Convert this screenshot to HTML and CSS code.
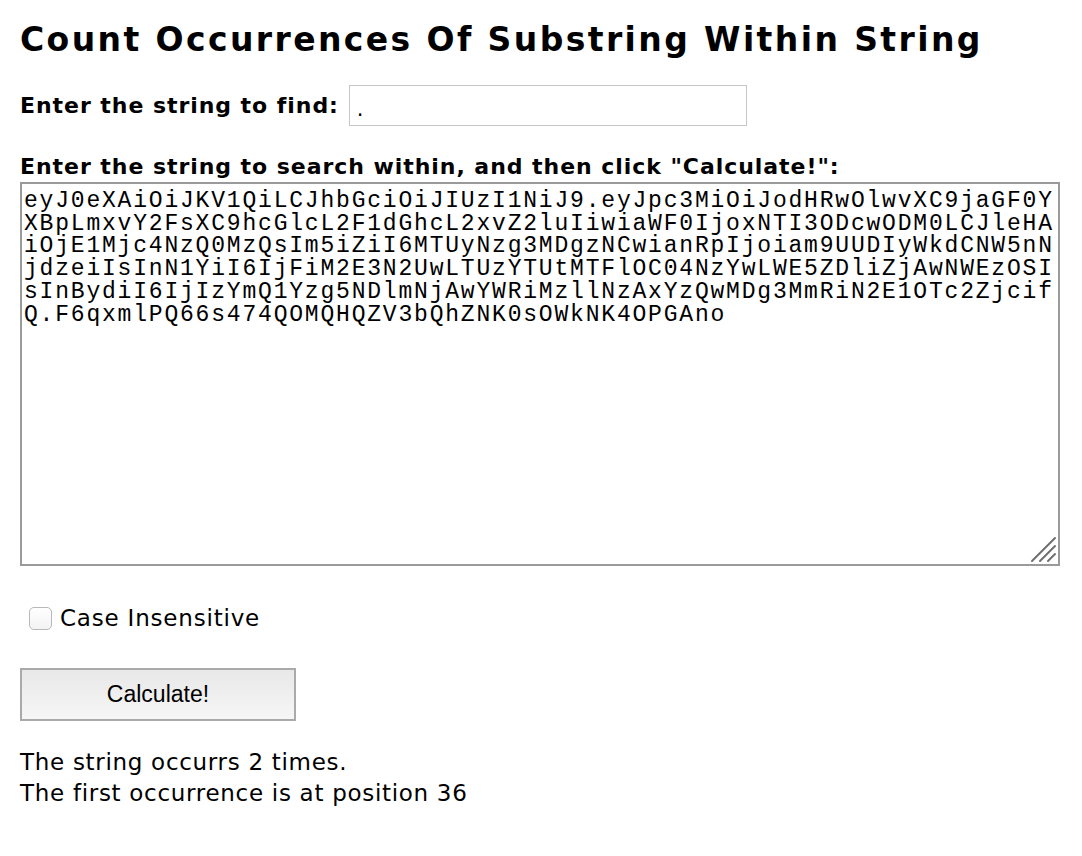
FILE: index.html
```html
<!DOCTYPE html>
<html>
<head>
<meta charset="utf-8">
<link rel="stylesheet" href="styles.css">
</head>
<body>
<div class="page">
  <h1 class="title">Count Occurrences Of Substring Within String</h1>
  <div class="find-row">
    <label class="label" for="find">Enter the string to find:</label>
    <input class="find-input" id="find" type="text" value=".">
  </div>
  <label class="label label-within" for="within">Enter the string to search within, and then click "Calculate!":</label>
  <div class="within-wrap">
    <textarea class="within" id="within">eyJ0eXAiOiJKV1QiLCJhbGciOiJIUzI1NiJ9.eyJpc3MiOiJodHRwOlwvXC9jaGF0YXBpLmxvY2FsXC9hcGlcL2F1dGhcL2xvZ2luIiwiaWF0IjoxNTI3ODcwODM0LCJleHAiOjE1Mjc4NzQ0MzQsIm5iZiI6MTUyNzg3MDgzNCwianRpIjoiam9UUDIyWkdCNW5nNjdzeiIsInN1YiI6IjFiM2E3N2UwLTUzYTUtMTFlOC04NzYwLWE5ZDliZjAwNWEzOSIsInBydiI6IjIzYmQ1Yzg5NDlmNjAwYWRiMzllNzAxYzQwMDg3MmRiN2E1OTc2ZjcifQ.F6qxmlPQ66s474QOMQHQZV3bQhZNK0sOWkNK4OPGAno</textarea>
    <svg class="grip" width="28" height="28" viewBox="0 0 28 28">
      <g stroke="#6e6e6e" stroke-width="2" stroke-linecap="round">
        <line x1="3" y1="26" x2="26" y2="3"/>
        <line x1="11" y1="26" x2="26" y2="11"/>
        <line x1="19" y1="26" x2="26" y2="19"/>
      </g>
    </svg>
  </div>
  <label class="check-row">
    <input class="check" type="checkbox">
    <span class="check-label">Case Insensitive</span>
  </label>
  <button class="calc" type="button">Calculate!</button>
  <div class="results">
    <div class="result-line">The string occurrs 2 times.</div>
    <div class="result-line">The first occurrence is at position 36</div>
  </div>
</div>
</body>
</html>
```

FILE: styles.css
```css
html, body {
  margin: 0;
  padding: 0;
  background: #ffffff;
}

.page {
  padding: 18px 20px 0 20px;
  display: flex;
  flex-direction: column;
  align-items: flex-start;
  font-family: "DejaVu Sans", Verdana, sans-serif;
  color: #000;
}

.title {
  margin: 0;
  font-size: 33px;
  letter-spacing: 2.4px;
  line-height: 44px;
  font-weight: bold;
  white-space: nowrap;
}

.find-row {
  margin-top: 23px;
  display: flex;
  align-items: center;
  gap: 10px;
}

.label {
  font-weight: bold;
  font-size: 22px;
  letter-spacing: 0.95px;
  line-height: 26px;
}

.find-input {
  box-sizing: border-box;
  width: 398px;
  height: 41px;
  border: 1px solid #c6c6c6;
  padding: 6px 6px 0 7px;
  font-family: "DejaVu Sans", Verdana, sans-serif;
  font-size: 21px;
  color: #000;
  background: #fff;
  outline: none;
}

.label-within {
  margin-top: 28px;
}

.within-wrap {
  position: relative;
  margin-top: 2px;
  display: flex;
}

.within {
  box-sizing: border-box;
  margin: 0;
  width: 1040px;
  height: 384px;
  border: 2px solid #9a9a9a;
  padding: 6px 2px 2px 2px;
  font-family: "Liberation Mono", "Courier New", monospace;
  font-size: 23px;
  letter-spacing: 1.8px;
  line-height: 22.7px;
  color: #000;
  word-break: break-all;
  resize: none;
  outline: none;
}

.grip {
  position: absolute;
  right: 3px;
  bottom: 3px;
  pointer-events: none;
}

.check-row {
  margin-top: 39px;
  margin-left: 9px;
  display: flex;
  align-items: center;
  gap: 8px;
}

.check {
  -webkit-appearance: none;
  appearance: none;
  margin: 0;
  width: 23px;
  height: 23px;
  box-sizing: border-box;
  border: 1px solid #b8b8b8;
  border-radius: 5px;
  background: linear-gradient(#ffffff, #f3f3f3);
}

.check-label {
  font-size: 23px;
  letter-spacing: 0.8px;
  line-height: 26px;
}

.calc {
  margin-top: 37px;
  box-sizing: border-box;
  width: 276px;
  height: 53px;
  border: 2px solid #aaaaaa;
  border-radius: 0;
  background: linear-gradient(#e8e8e8, #f6f6f6);
  font-family: "Liberation Sans", Arial, sans-serif;
  font-size: 23px;
  color: #000;
}

.results {
  margin-top: 26px;
}

.result-line {
  font-size: 23px;
  letter-spacing: 0.7px;
  line-height: 31px;
}
```
